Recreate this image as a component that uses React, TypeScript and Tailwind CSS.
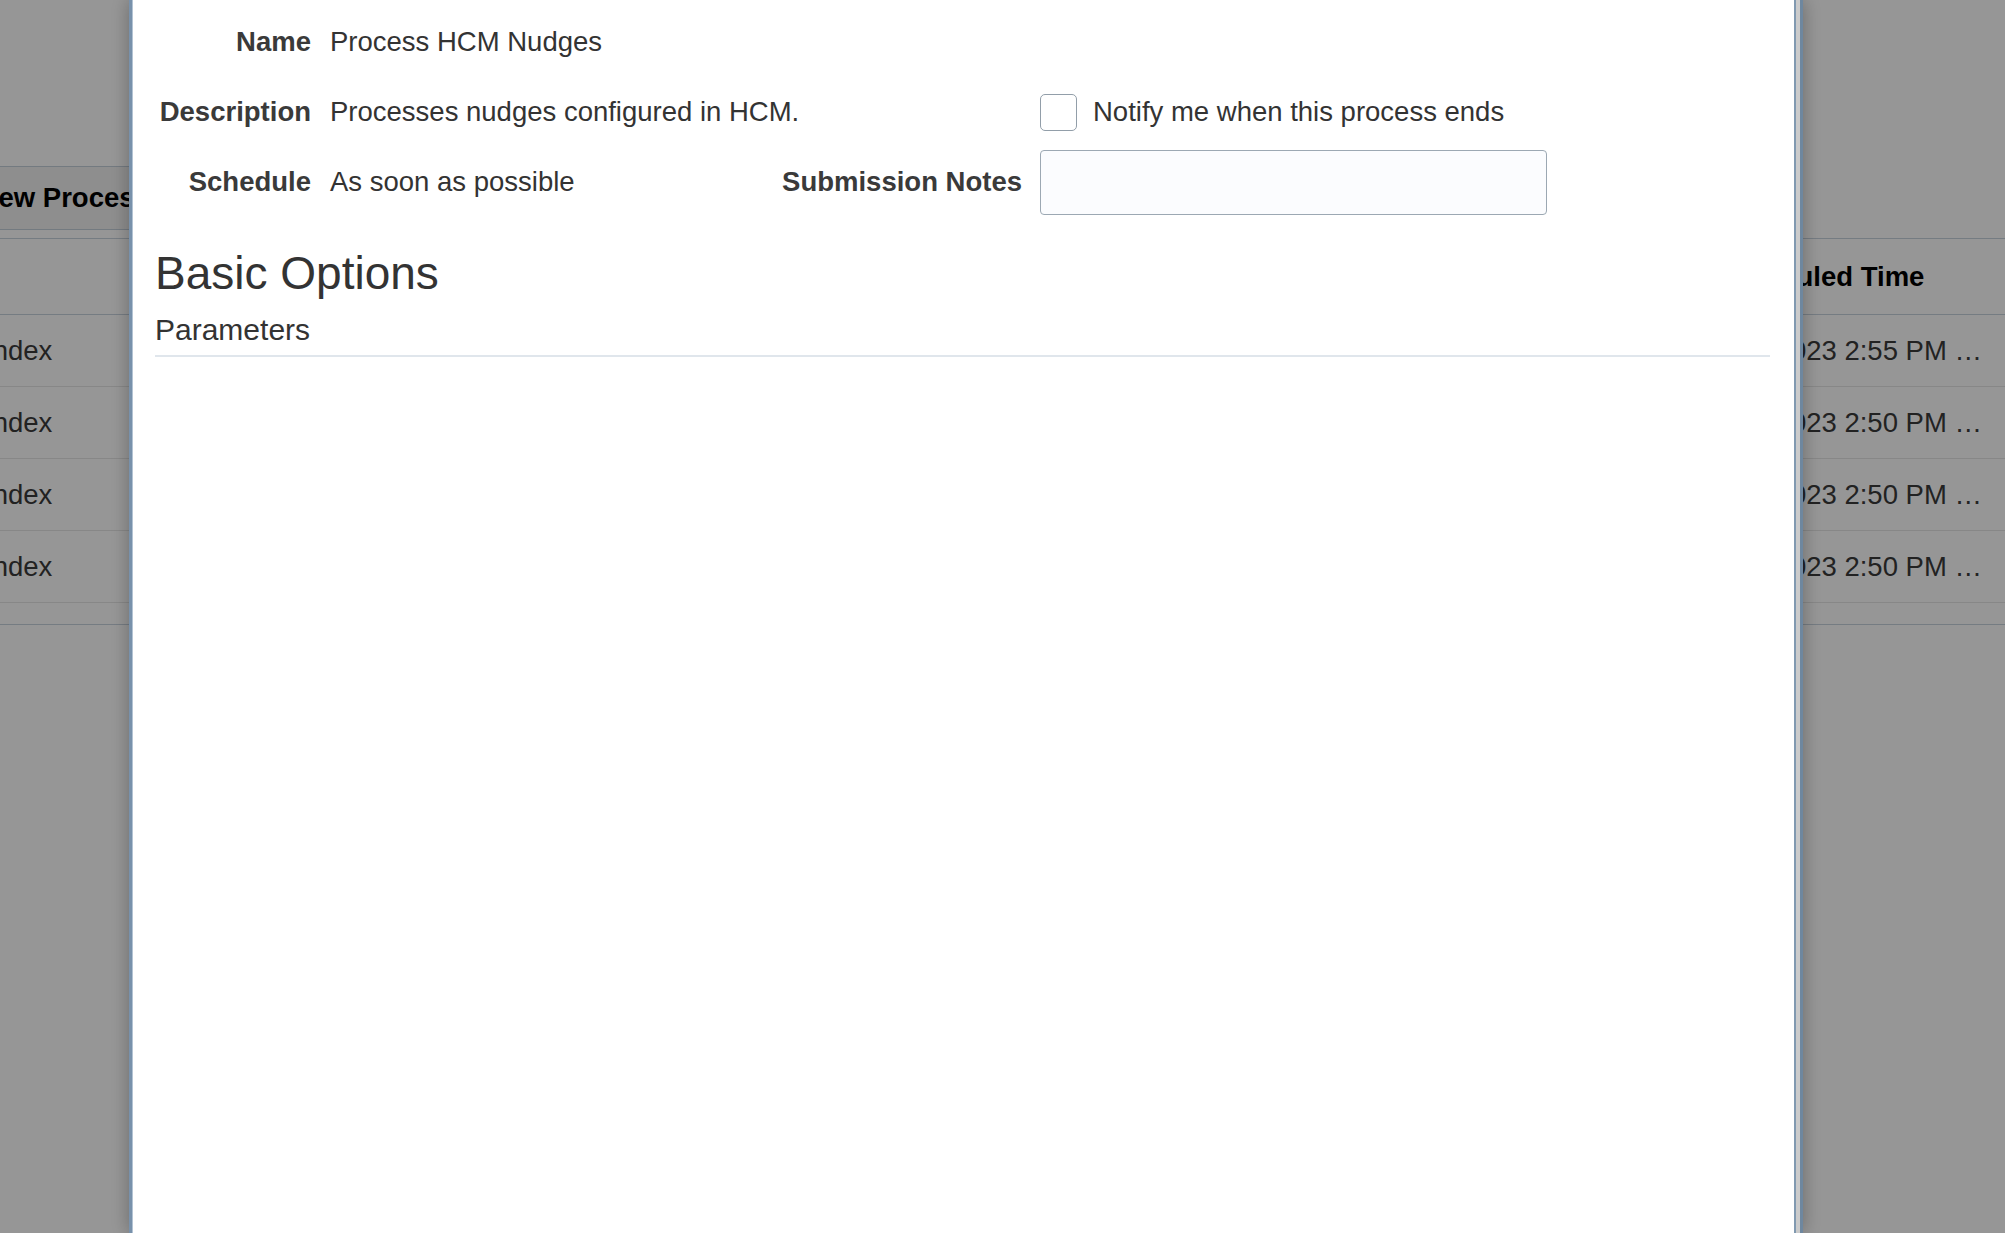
export default function App() {
  return (
    <div className="relative h-[1233px] w-full overflow-hidden bg-white font-['Liberation_Sans',Arial,sans-serif] text-[27.5px]">
      {/* page behind the modal */}
      <div className="pt-[166px]">
        <div className="flex h-[64px]">
          <div className="flex w-[700px] items-center border-y-[1.5px] border-[#c4cfda] bg-[#f1f1f1]">
            <span className="-ml-[27px] whitespace-nowrap font-bold text-black">View Process Details</span>
          </div>
        </div>

        <div className="mt-[8px] border-t-[1.5px] border-[#c8d3de]">
          <div className="flex h-[76px] items-center border-b-[1.5px] border-[#c8d3de]">
            <div className="flex-1" />
            <div className="w-[291px] shrink-0 whitespace-nowrap font-bold text-black">Scheduled Time</div>
          </div>
          {["8/22/2023 2:55 PM …", "8/22/2023 2:50 PM …", "8/22/2023 2:50 PM …", "8/22/2023 2:50 PM …"].map((t, i) => (
            <div key={i} className="flex h-[72px] items-center border-b border-[#e6e6e6] text-[#3a3a3a]">
              <span className="-ml-[15px] whitespace-nowrap">Index</span>
              <div className="flex-1" />
              <div className="w-[310px] shrink-0 whitespace-nowrap pr-[23px] text-right">{t}</div>
            </div>
          ))}
          <div className="h-[22px] border-b-[1.5px] border-[#c8d3de]" />
        </div>
      </div>

      {/* modal overlay */}
      <div className="fixed inset-0 bg-black/[0.41] pl-[129px]">
        <div className="flex h-full w-[1674px] shadow-[0_0_18px_rgba(0,0,0,0.3)]">
          <div className="w-[3px] bg-[#7891ab]" />
          <div className="w-[1px] bg-[#b3c3d3]" />

          <div className="flex-1 bg-white pl-[22px] pr-[24px] pt-[7px] text-[#333333]">
            <div className="flex h-[70px] items-center">
              <div className="w-[156px] text-right font-bold text-[#3a3a3a]">Name</div>
              <div className="ml-[19px] whitespace-nowrap">Process HCM Nudges</div>
            </div>
            <div className="flex h-[70px] items-center">
              <div className="w-[156px] text-right font-bold text-[#3a3a3a]">Description</div>
              <div className="ml-[19px] w-[451px] whitespace-nowrap">Processes nudges configured in HCM.</div>
              <div className="w-[241px]" />
              <div className="ml-[18px] flex items-center">
                <span className="h-[37px] w-[37px] rounded-[5px] border-[1.5px] border-[#929ea9] bg-white" />
                <span className="ml-[16px] whitespace-nowrap">Notify me when this process ends</span>
              </div>
            </div>
            <div className="flex h-[70px] items-center">
              <div className="w-[156px] text-right font-bold text-[#3a3a3a]">Schedule</div>
              <div className="ml-[19px] w-[451px] whitespace-nowrap">As soon as possible</div>
              <div className="w-[241px] whitespace-nowrap text-right font-bold text-[#3a3a3a]">Submission Notes</div>
              <input
                type="text"
                className="ml-[18px] h-[65px] w-[507px] rounded-[4px] border-[1.5px] border-[#9ca8b3] bg-[#fbfcfe] px-3 outline-none"
              />
            </div>

            <h2 className="mt-[29px] text-[46px] leading-[54px] font-normal text-[#333333]">Basic Options</h2>
            <div className="mt-[13px] border-b-2 border-[#e0e6ec] pb-[8px] text-[30px] leading-[34px] text-[#333333]">Parameters</div>
          </div>

          <div className="w-[2px] bg-[#8199b0]" />
          <div className="w-[4px] bg-[#cbcbcb]" />
          <div className="w-[3px] bg-[#6e879f]" />
        </div>
      </div>
    </div>
  );
}
